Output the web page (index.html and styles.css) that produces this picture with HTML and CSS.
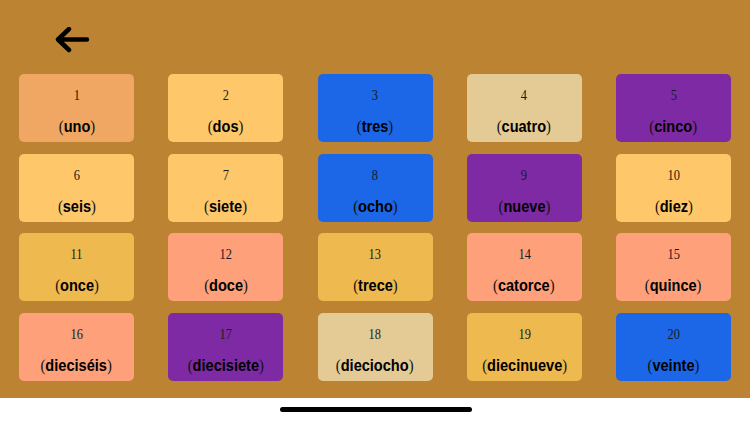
FILE: index.html
```html
<!DOCTYPE html>
<html lang="es">
<head>
<meta charset="utf-8">
<title>Números</title>
<link rel="stylesheet" href="styles.css">
</head>
<body>
<div class="screen">
  <header class="topbar">
    <button class="back" aria-label="Atrás">
      <svg width="36" height="26" viewBox="0 0 36 26"><path d="M33 12.5 H4 M15 2 L4 12.5 L15 23" fill="none" stroke="#000" stroke-width="4.5" stroke-linecap="round" stroke-linejoin="round"/></svg>
    </button>
  </header>
  <main class="grid">
    <div class="card c-sandy"><span class="num">1</span><span class="word">(<b>uno</b>)</span></div>
    <div class="card c-yellow"><span class="num">2</span><span class="word">(<b>dos</b>)</span></div>
    <div class="card c-blue"><span class="num">3</span><span class="word">(<b>tres</b>)</span></div>
    <div class="card c-tan"><span class="num">4</span><span class="word">(<b>cuatro</b>)</span></div>
    <div class="card c-purple"><span class="num">5</span><span class="word">(<b>cinco</b>)</span></div>
    <div class="card c-yellow"><span class="num">6</span><span class="word">(<b>seis</b>)</span></div>
    <div class="card c-yellow"><span class="num">7</span><span class="word">(<b>siete</b>)</span></div>
    <div class="card c-blue"><span class="num">8</span><span class="word">(<b>ocho</b>)</span></div>
    <div class="card c-purple"><span class="num">9</span><span class="word">(<b>nueve</b>)</span></div>
    <div class="card c-yellow"><span class="num">10</span><span class="word">(<b>diez</b>)</span></div>
    <div class="card c-gold"><span class="num">11</span><span class="word">(<b>once</b>)</span></div>
    <div class="card c-salmon"><span class="num">12</span><span class="word">(<b>doce</b>)</span></div>
    <div class="card c-gold"><span class="num">13</span><span class="word">(<b>trece</b>)</span></div>
    <div class="card c-salmon"><span class="num">14</span><span class="word">(<b>catorce</b>)</span></div>
    <div class="card c-salmon"><span class="num">15</span><span class="word">(<b>quince</b>)</span></div>
    <div class="card c-salmon"><span class="num">16</span><span class="word">(<b>dieciséis</b>)</span></div>
    <div class="card c-purple"><span class="num">17</span><span class="word">(<b>diecisiete</b>)</span></div>
    <div class="card c-tan"><span class="num">18</span><span class="word">(<b>dieciocho</b>)</span></div>
    <div class="card c-gold"><span class="num">19</span><span class="word">(<b>diecinueve</b>)</span></div>
    <div class="card c-blue"><span class="num">20</span><span class="word">(<b>veinte</b>)</span></div>
  </main>
</div>
<footer class="homearea"><div class="homebar"></div></footer>
</body>
</html>
```
FILE: styles.css
```css
html, body {
  margin: 0;
  padding: 0;
  width: 750px;
  height: 422px;
  overflow: hidden;
  background: #ffffff;
}
.screen {
  height: 398px;
  background: #bc8432;
  display: flex;
  flex-direction: column;
}
.topbar {
  height: 74px;
  display: flex;
  align-items: flex-start;
}
.back {
  margin: 27px 0 0 54px;
  padding: 0;
  border: 0;
  background: none;
  width: 36px;
  height: 26px;
  display: block;
}
.back svg { display: block; }
.grid {
  display: grid;
  grid-template-columns: repeat(5, 115px);
  grid-auto-rows: 68px;
  column-gap: 34.25px;
  row-gap: 11.67px;
  padding: 0 19px;
}
.card {
  border-radius: 5px;
  display: flex;
  flex-direction: column;
  align-items: center;
  padding-top: 11px;
  box-sizing: border-box;
}
.num {
  display: inline-block;
  font-family: "Liberation Serif", "Times New Roman", serif;
  font-size: 15.5px;
  line-height: 20px;
  color: #1a1a1a;
  transform: scaleX(0.8);
}
.word {
  display: inline-block;
  margin-top: 12px;
  font-family: "Liberation Serif", "Times New Roman", serif;
  font-size: 16px;
  line-height: 20px;
  color: #111;
  white-space: nowrap;
  transform: scaleX(0.91);
}
.word b {
  font-family: "Liberation Sans", Arial, sans-serif;
  font-weight: 700;
  color: #000;
}
.c-sandy { background: #efa763; }
.c-yellow { background: #fec76a; }
.c-blue { background: #1b67e8; }
.c-tan { background: #e4cb95; }
.c-purple { background: #7f2aa5; }
.c-gold { background: #eeb94e; }
.c-salmon { background: #fea07a; }
.homearea {
  height: 24px;
  display: flex;
  justify-content: center;
  align-items: flex-start;
}
.homebar {
  margin-top: 9px;
  margin-left: 1px;
  width: 192px;
  height: 5px;
  border-radius: 3px;
  background: #000;
}
```
